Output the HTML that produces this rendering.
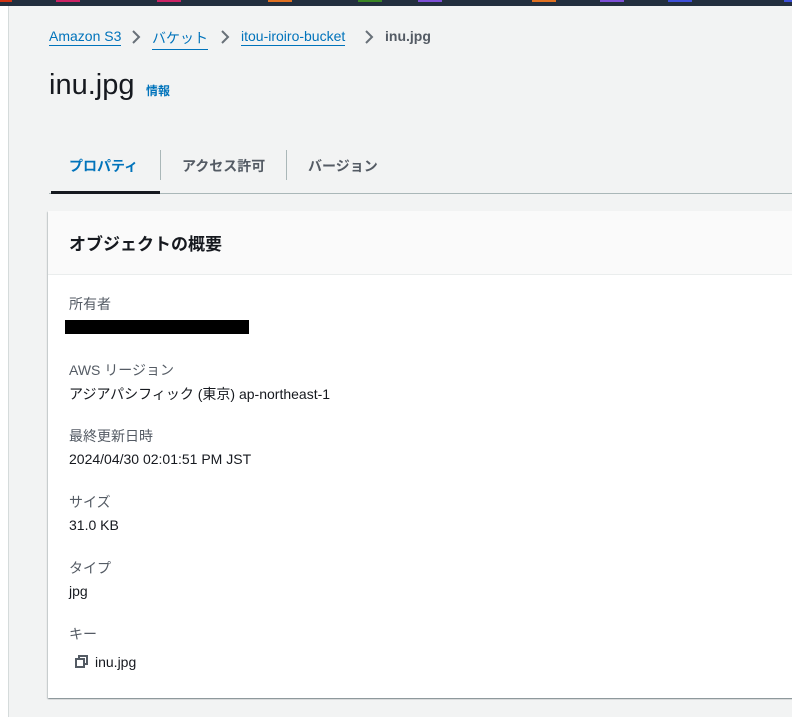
<!DOCTYPE html>
<html><head><meta charset="utf-8"><style>
*{margin:0;padding:0;box-sizing:border-box}
body{width:792px;height:717px;overflow:hidden;background:#f2f3f3;font-family:"Liberation Sans","Noto Sans CJK JP",sans-serif;color:#16191f;position:relative}
.top{position:absolute;left:0;top:0;width:792px;height:6px;background:#232f3e}
.seg{position:absolute;top:0;height:2px;width:24px}
.side{position:absolute;left:0;top:6px;width:9px;height:711px;background:#fff;border-right:1px solid #d5dbdb}
.a{position:absolute;white-space:nowrap}
.bc{font-size:14px;color:#0073bb;border-bottom:1px solid #0073bb;padding-bottom:1px;top:28px}
.chev{position:absolute;top:29px}
.tabs{position:absolute;top:193px;left:49px;right:0;border-top:1px solid #aab7b8}
.card{position:absolute;left:48px;top:211px;width:760px;height:487px;background:#fff;box-shadow:0 1px 1px rgba(0,28,36,.3),1px 1px 1px rgba(0,28,36,.15),-1px 1px 1px rgba(0,28,36,.15)}
.ch{height:64px;background:#fafafa;border-bottom:1px solid #eaeded}
.lbl{font-size:14px;color:#545b64}
.val{font-size:14px;color:#16191f}
</style></head><body>
<div class="top">
<div class="seg" style="left:0;width:12px;background:#d13212"></div>
<div class="seg" style="left:56px;background:#cc2264"></div>
<div class="seg" style="left:157px;background:#cc2264"></div>
<div class="seg" style="left:268px;background:#e07020"></div>
<div class="seg" style="left:358px;background:#3b8624"></div>
<div class="seg" style="left:418px;background:#7d4fd6"></div>
<div class="seg" style="left:532px;background:#e07020"></div>
<div class="seg" style="left:600px;background:#7d4fd6"></div>
<div class="seg" style="left:668px;background:#3d4fd8"></div>
<div class="seg" style="left:784px;width:8px;background:#3d4fd8"></div>
</div>
<div class="side"></div>
<div class="a bc" style="left:49px">Amazon S3</div>
<svg class="chev" style="left:131px" width="10" height="16" viewBox="0 0 10 16" fill="none" stroke="#687078" stroke-width="2"><path d="M2 2l6 6-6 6"/></svg>
<div class="a bc" style="left:152px">バケット</div>
<svg class="chev" style="left:220px" width="10" height="16" viewBox="0 0 10 16" fill="none" stroke="#687078" stroke-width="2"><path d="M2 2l6 6-6 6"/></svg>
<div class="a bc" style="left:241px">itou-iroiro-bucket</div>
<svg class="chev" style="left:364px" width="10" height="16" viewBox="0 0 10 16" fill="none" stroke="#687078" stroke-width="2"><path d="M2 2l6 6-6 6"/></svg>
<div class="a" style="top:28px;left:385px;font-size:14px;font-weight:bold;color:#545b64">inu.jpg</div>
<div class="a" style="top:69px;left:49px;font-size:29px;">inu.jpg</div>
<div class="a" style="top:82px;left:146px;font-size:12px;color:#0073bb;font-weight:bold">情報</div>
<div class="a" style="top:156px;left:69px;font-size:14px;font-weight:bold;color:#0073bb">プロパティ</div>
<div class="a" style="top:150px;left:160px;width:1px;height:30px;background:#aab7b8"></div>
<div class="a" style="top:156px;left:182px;font-size:14px;font-weight:bold;color:#545b64">アクセス許可</div>
<div class="a" style="top:150px;left:286px;width:1px;height:30px;background:#aab7b8"></div>
<div class="a" style="top:156px;left:308px;font-size:14px;font-weight:bold;color:#545b64">バージョン</div>
<div class="tabs"></div>
<div class="a" style="top:191px;left:51px;width:109px;height:3px;background:#16191f"></div>
<div class="card"><div class="ch"></div></div>
<div class="a" style="top:230px;left:69px;font-size:17px;font-weight:bold">オブジェクトの概要</div>
<div class="a lbl" style="top:294px;left:69px">所有者</div>
<div class="a" style="top:320px;left:65px;width:184px;height:14px;background:#000"></div>
<div class="a lbl" style="top:360px;left:69px">AWS リージョン</div>
<div class="a val" style="top:384px;left:69px">アジアパシフィック (東京) ap-northeast-1</div>
<div class="a lbl" style="top:426px;left:69px">最終更新日時</div>
<div class="a val" style="top:451px;left:69px">2024/04/30 02:01:51 PM JST</div>
<div class="a lbl" style="top:492px;left:69px">サイズ</div>
<div class="a val" style="top:517px;left:69px">31.0 KB</div>
<div class="a lbl" style="top:558px;left:69px">タイプ</div>
<div class="a val" style="top:583px;left:69px">jpg</div>
<div class="a lbl" style="top:624px;left:69px">キー</div>
<svg class="a" style="top:655px;left:75px" width="14" height="14" viewBox="0 0 14 14" fill="none" stroke="#545b64" stroke-width="2"><rect x="1" y="4" width="8" height="8"/><path d="M4 4V1h8v8H9"/></svg>
<div class="a val" style="top:654px;left:95px">inu.jpg</div>
</body></html>
